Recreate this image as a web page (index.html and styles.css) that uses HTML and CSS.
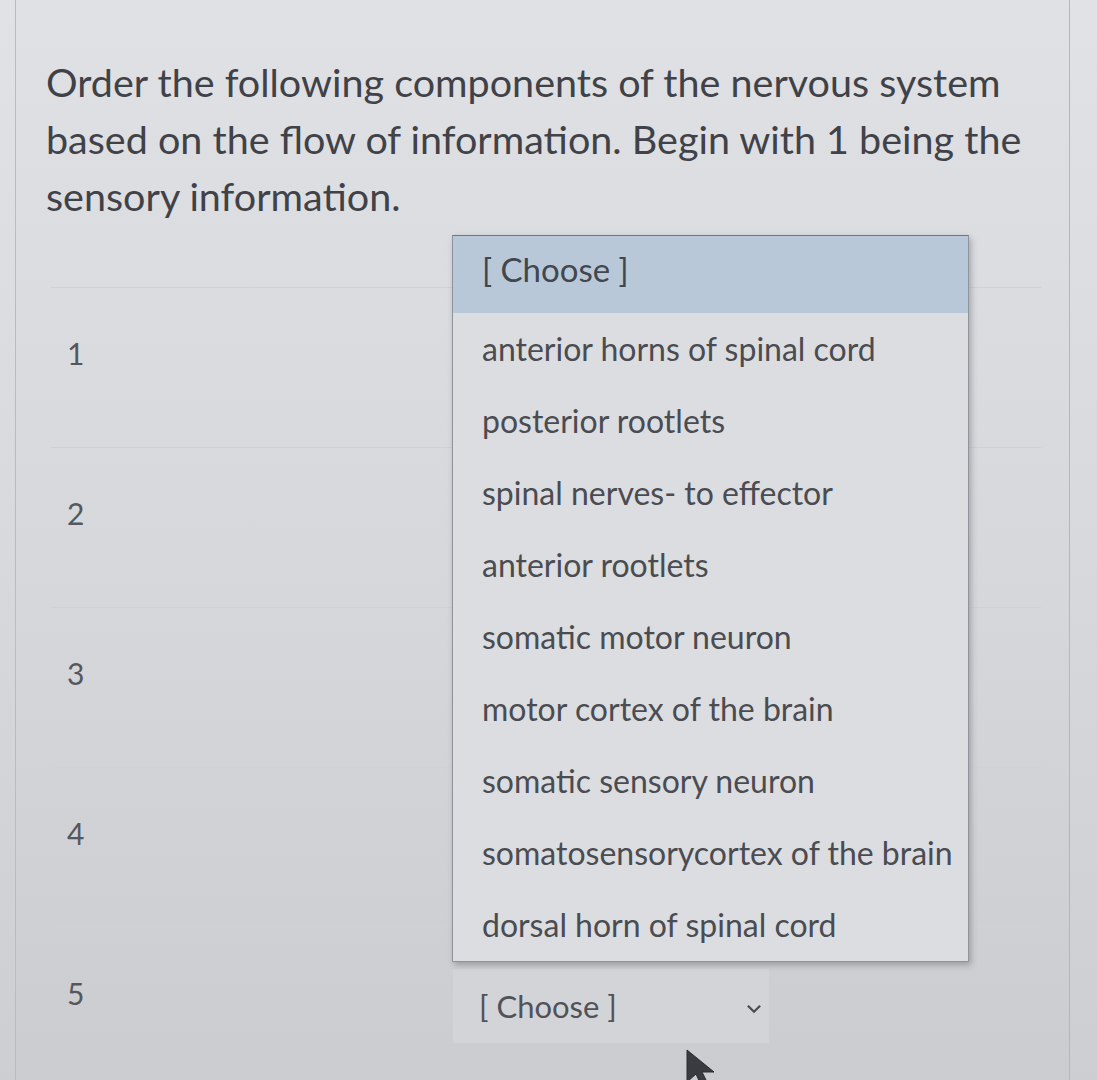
FILE: index.html
```html
<!DOCTYPE html>
<html lang="en">
<head>
<meta charset="utf-8">
<title>Ordering question</title>
<link rel="stylesheet" href="styles.css">
</head>
<body>
<main class="card">
  <p class="question">Order the following components of the nervous system based on the flow of information. Begin with 1 being the sensory information.</p>

  <div class="answers">
    <!-- selects of rows 1-4 sit behind the open list -->
    <div class="row">
      <span class="num">1</span>
      <div class="select covered"><span>[ Choose ]</span><svg class="chev" viewBox="0 0 14 9" width="14" height="9"><path d="M1.5 1.5 L7 7 L12.5 1.5" fill="none" stroke="#4a4c52" stroke-width="2"/></svg></div>
    </div>
    <div class="row">
      <span class="num">2</span>
      <div class="select covered"><span>[ Choose ]</span><svg class="chev" viewBox="0 0 14 9" width="14" height="9"><path d="M1.5 1.5 L7 7 L12.5 1.5" fill="none" stroke="#4a4c52" stroke-width="2"/></svg></div>
    </div>
    <div class="row">
      <span class="num">3</span>
      <div class="select covered"><span>[ Choose ]</span><svg class="chev" viewBox="0 0 14 9" width="14" height="9"><path d="M1.5 1.5 L7 7 L12.5 1.5" fill="none" stroke="#4a4c52" stroke-width="2"/></svg></div>
    </div>
    <div class="row">
      <span class="num">4</span>
      <div class="select covered"><span>[ Choose ]</span><svg class="chev" viewBox="0 0 14 9" width="14" height="9"><path d="M1.5 1.5 L7 7 L12.5 1.5" fill="none" stroke="#4a4c52" stroke-width="2"/></svg></div>
    </div>
    <div class="row">
      <span class="num">5</span>
      <div class="select"><span>[ Choose ]</span><svg class="chev" viewBox="0 0 14 9" width="14" height="9"><path d="M1.5 1.5 L7 7 L12.5 1.5" fill="none" stroke="#4a4c52" stroke-width="2"/></svg></div>
    </div>

    <!-- open option list of the first select -->
    <ul class="menu" role="listbox">
      <li class="opt head" aria-selected="true">[ Choose ]</li>
      <li class="opt">anterior horns of spinal cord</li>
      <li class="opt">posterior rootlets</li>
      <li class="opt">spinal nerves- to effector</li>
      <li class="opt">anterior rootlets</li>
      <li class="opt">somatic motor neuron</li>
      <li class="opt">motor cortex of the brain</li>
      <li class="opt">somatic sensory neuron</li>
      <li class="opt">somatosensorycortex of the brain</li>
      <li class="opt">dorsal horn of spinal cord</li>
    </ul>

    <svg class="cursor" viewBox="0 0 40 40" width="40" height="40"><path d="M2 2 L2 34 L11 26 L17 39 L23 36 L17 24 L29 24 Z" fill="#3a3b40" stroke="#2a2b30" stroke-width="1"/></svg>
  </div>
</main>
</body>
</html>
```

FILE: styles.css
```css
html, body {
  margin: 0;
  padding: 0;
  height: 100%;
  overflow: hidden;
}

body {
  background: linear-gradient(180deg, #e1e2e5 0%, #d8d9dd 50%, #cdced2 100%);
  font-family: Lato, "Open Sans", "Liberation Sans", sans-serif;
  color: #3e4046;
}

.card {
  margin: 0 27px 0 15px;
  min-height: 1080px;
  border-left: 1px solid #b9bbc0;
  border-right: 1px solid #b4b6bb;
  background: linear-gradient(180deg, #e0e1e4 0%, #d6d7db 55%, #cbccd0 100%);
  padding: 53px 0 0 30px;
  box-sizing: border-box;
}

.question {
  margin: 0;
  width: 990px;
  font-size: 39.5px;
  line-height: 57px;
  color: #404248;
}

.answers {
  position: relative;
  margin: 63px 0 0 5px;
  width: 990px;
}

.row {
  display: grid;
  grid-template-columns: 401px 318px;
  align-items: start;
  height: 160px;
  border-top: 1px solid #d0d1d5;
  box-sizing: border-box;
  padding-top: 40px;
}

.num {
  padding: 10px 0 0 16px;
  font-size: 30px;
  line-height: 30px;
  color: #55575d;
}

.select {
  display: flex;
  align-items: center;
  justify-content: space-between;
  height: 76px;
  padding: 0 7px 0 26px;
  box-sizing: border-box;
  background: #d3d4d8;
  border: 1px solid #cdced2;
  font-size: 31px;
  color: #505258;
}

.select.covered {
  visibility: hidden;
}

.chev {
  margin-top: 6px;
  width: 16px;
  height: 10px;
}

.menu {
  position: absolute;
  left: 401px;
  top: -52px;
  width: 515px;
  margin: 0;
  padding: 0;
  list-style: none;
  background: #dcdde0;
  border: 1px solid #8e949c;
  border-top-color: #6f7680;
  box-shadow: 2px 3px 6px rgba(60, 62, 70, 0.35);
}

.opt {
  height: 72px;
  line-height: 72px;
  padding-left: 29px;
  font-size: 32px;
  color: #4a4c52;
  white-space: nowrap;
}

.opt.head {
  height: 77px;
  line-height: 66px;
  font-size: 33px;
  background: #b9c8d8;
  color: #42464d;
}

.cursor {
  position: absolute;
  left: 634px;
  top: 761px;
}
```
